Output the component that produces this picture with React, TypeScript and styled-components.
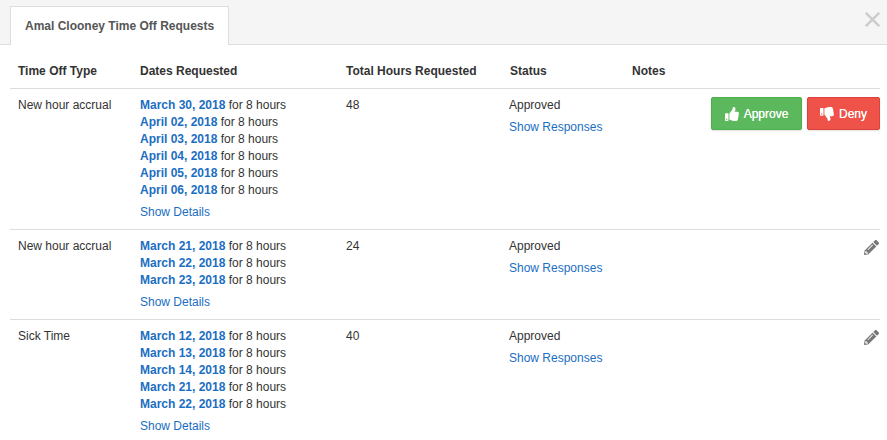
import React from 'react';
import styled, {createGlobalStyle} from 'styled-components';
import {FaPencilAlt, FaThumbsDown, FaThumbsUp} from 'react-icons/fa';

const GlobalStyle = createGlobalStyle`
    html, body {
        margin: 0;
        padding: 0;
        background: #fff;
        overflow: hidden;
    }

    body {
        font-family: 'Liberation Sans', Arial, sans-serif;
        font-size: 12px;
        color: #333;
    }
`;

const Modal = styled.div`
    width: 887px;
    height: 440px;
    overflow: hidden;
`;

const TabBar = styled.div`
    display: flex;
    justify-content: space-between;
    align-items: flex-start;
    height: 38px;
    padding: 6px 6px 0 10px;
    background: #f5f5f5;
    border-bottom: 1px solid #ddd;
`;

const Tab = styled.div`
    height: 39px;
    box-sizing: border-box;
    padding: 0 14px;
    display: flex;
    align-items: center;
    background: #fff;
    border: 1px solid #ddd;
    border-bottom: none;
    font-weight: bold;
    color: #555;
    margin-bottom: -1px;
`;

const Close = styled.svg`
    width: 15px;
    height: 15px;
    margin: 6px 1px 0 0;
    stroke: #ccc;
    stroke-width: 2.4;
    fill: none;
`;

const Table = styled.div`
    margin: 0 7px 0 10px;
`;

const Row = styled.div`
    display: grid;
    grid-template-columns: 122px 206px 163px 123px 1fr auto;
    padding: 8px 0 8px 8px;
    border-bottom: 1px solid #ddd;
    line-height: 17px;
    color: #333;
`;

const HeadRow = styled(Row)`
    grid-template-columns: 122px 206px 164px 122px 1fr auto;
    padding: 18px 0 8px 8px;
    font-weight: bold;
`;

const DateLine = styled.div`
    white-space: nowrap;
`;

const DateLink = styled.a`
    color: #1b6ec2;
    font-weight: bold;
`;

const Link = styled.a`
    display: block;
    color: #1b6ec2;
    margin-top: 5px;
`;

const Actions = styled.div`
    display: flex;
    gap: 5px;
    align-items: flex-start;
    margin-bottom: -20px;
`;

const ActionButton = styled.button<{ $tone: 'green' | 'red' }>`
    display: flex;
    align-items: center;
    justify-content: center;
    gap: 5px;
    height: 33px;
    padding: 0;
    border: 1px solid ${p => p.$tone === 'green' ? '#4cae4c' : '#d9433b'};
    border-radius: 2px;
    background: ${p => p.$tone === 'green' ? '#5cb85c' : '#ee5249'};
    box-shadow: 0 1px 2px rgba(0, 0, 0, 0.12);
    color: #fff;
    font-family: inherit;
    font-size: 12px;
    text-shadow: 0 0 0.4px #fff;
    width: ${p => p.$tone === 'green' ? '91px' : '73px'};

    svg {
        width: 14px;
        height: 14px;
    }
`;

const EditIcon = styled(FaPencilAlt)`
    display: block;
    width: 15px;
    height: 15px;
    margin: 2px 1px 0 0;
    color: #777;
`;

const requests = [
    {
        type: 'New hour accrual',
        dates: ['March 30, 2018', 'April 02, 2018', 'April 03, 2018', 'April 04, 2018', 'April 05, 2018', 'April 06, 2018'],
        hours: 48,
        pending: true,
    },
    {
        type: 'New hour accrual',
        dates: ['March 21, 2018', 'March 22, 2018', 'March 23, 2018'],
        hours: 24,
        pending: false,
    },
    {
        type: 'Sick Time',
        dates: ['March 12, 2018', 'March 13, 2018', 'March 14, 2018', 'March 21, 2018', 'March 22, 2018'],
        hours: 40,
        pending: false,
    },
];

const App = () => (
    <Modal>
        <GlobalStyle/>
        <TabBar>
            <Tab>Amal Clooney Time Off Requests</Tab>
            <Close viewBox="0 0 15 15"><path d="M0.8 0.8L14.2 14.2M14.2 0.8L0.8 14.2"/></Close>
        </TabBar>
        <Table>
            <HeadRow>
                <div>Time Off Type</div>
                <div>Dates Requested</div>
                <div>Total Hours Requested</div>
                <div>Status</div>
                <div>Notes</div>
                <div/>
            </HeadRow>
            {requests.map((r, i) => (
                <Row key={i}>
                    <div>{r.type}</div>
                    <div>
                        {r.dates.map(d => (
                            <DateLine key={d}><DateLink>{d}</DateLink> for 8 hours</DateLine>
                        ))}
                        <Link>Show Details</Link>
                    </div>
                    <div>{r.hours}</div>
                    <div>
                        Approved
                        <Link>Show Responses</Link>
                    </div>
                    <div/>
                    {r.pending ? (
                        <Actions>
                            <ActionButton $tone="green"><FaThumbsUp/>Approve</ActionButton>
                            <ActionButton $tone="red"><FaThumbsDown/>Deny</ActionButton>
                        </Actions>
                    ) : (
                        <EditIcon/>
                    )}
                </Row>
            ))}
        </Table>
    </Modal>
);

export default App;
